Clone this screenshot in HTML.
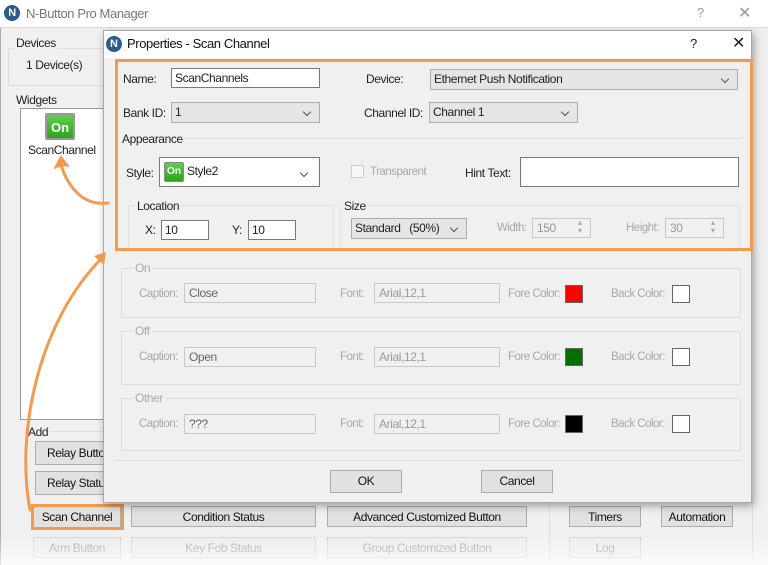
<!DOCTYPE html>
<html><head><meta charset="utf-8"><style>
*{box-sizing:border-box;margin:0;padding:0}
body{width:768px;height:565px;overflow:hidden;background:#f0f0f0;font-family:"Liberation Sans",sans-serif;font-size:12px;letter-spacing:-0.4px;color:#222;position:relative}
.a{position:absolute;white-space:nowrap}
.btn{position:absolute;background:#e1e1e1;border:1px solid #adadad;text-align:center;line-height:20px;font-size:12px;color:#111;white-space:nowrap;overflow:hidden}
.dis{color:#a8a8a8;background:#ececec;border-color:#d4d4d4}
.in{position:absolute;background:#fff;border:1px solid #7a7a7a;padding-left:3px;line-height:18px}
.sel{position:absolute;background:#e5e5e5;border:1px solid #adadad;padding-left:3px;line-height:19px}
.sel:after{content:"";position:absolute;right:9px;top:6px;width:5px;height:5px;border-right:1px solid #555;border-bottom:1px solid #555;transform:rotate(45deg)}
.grp{position:absolute;border:1px solid #dcdcdc}
.gl{position:absolute;background:#f0f0f0;padding:0 2px;top:-8px;left:8px;color:#aaa}
.g{color:#a8a8a8;font-size:11.5px;letter-spacing:-0.5px}
.din{position:absolute;background:#f0f0f0;border:1px solid #c8c8c8;padding-left:4px;line-height:18px;color:#999}
.sw{position:absolute;width:18px;height:18px;border:1px solid #666}
.on{position:absolute;background:linear-gradient(#5fd04a,#2ea21e);border:1px solid #2a7a20;border-radius:2px;color:#fff;font-weight:bold;text-align:center;letter-spacing:0}
</style></head><body>
<div class="a" style="left:0;top:0;width:768px;height:28px;background:#fff;border-bottom:1px solid #ddd"></div>
<div class="a" style="left:4px;top:5px;width:16px;height:16px;border-radius:50%;background:#2a5b8a;color:#fff;font-weight:bold;font-size:11px;text-align:center;line-height:16px">N</div>
<div class="a" style="left:26px;top:6px;font-size:13px;color:#777">N-Button Pro Manager</div>
<div class="a" style="left:697px;top:5px;font-size:13px;color:#999">?</div>
<div class="a" style="left:738px;top:3px;font-size:16px;color:#999">✕</div>
<div class="a" style="left:0;top:28px;width:1px;height:537px;background:#aaa"></div>
<div class="grp" style="left:8px;top:48px;width:120px;height:38px"></div>
<div class="a" style="left:14px;top:36px;background:#f0f0f0;padding:0 2px">Devices</div>
<div class="a" style="left:26px;top:58px">1 Device(s)</div>
<div class="a" style="left:16px;top:93px">Widgets</div>
<div class="a" style="left:20px;top:108px;width:100px;height:312px;background:#fff;border:1px solid #999"></div>
<div class="on" style="left:45px;top:113px;width:30px;height:27px;line-height:25px;font-size:13px;border:2px solid #999">On</div>
<div class="a" style="left:28px;top:143px">ScanChannel</div>
<div class="a" style="left:28px;top:425px">Add</div>
<div class="a" style="left:50px;top:431px;width:60px;height:1px;background:#ddd"></div>
<div class="a" style="left:549px;top:500px;width:1px;height:60px;background:#ddd"></div>
<div class="a" style="left:752px;top:500px;width:1px;height:60px;background:#ddd"></div>
<div class="btn" style="left:35px;top:441px;width:80px;height:24px;text-align:left;padding-left:11px;line-height:22px">Relay Button</div>
<div class="btn" style="left:35px;top:471px;width:80px;height:24px;text-align:left;padding-left:11px;line-height:22px">Relay Status</div>
<div class="btn" style="left:33px;top:506px;width:88px;height:22px">Scan Channel</div>
<div class="a" style="left:31px;top:504px;width:93px;height:26px;border:3px solid #f39a4c"></div>
<div class="btn" style="left:131px;top:506px;width:185px;height:21px">Condition Status</div>
<div class="btn" style="left:327px;top:506px;width:200px;height:21px">Advanced Customized Button</div>
<div class="btn" style="left:569px;top:506px;width:72px;height:21px">Timers</div>
<div class="btn" style="left:661px;top:506px;width:72px;height:21px">Automation</div>
<div class="btn dis" style="left:33px;top:537px;width:88px;height:21px">Arm Button</div>
<div class="btn dis" style="left:131px;top:537px;width:185px;height:21px">Key Fob Status</div>
<div class="btn dis" style="left:327px;top:537px;width:200px;height:21px">Group Customized Button</div>
<div class="btn dis" style="left:569px;top:537px;width:72px;height:21px">Log</div>
<div class="a" style="left:0;top:535px;width:768px;height:30px;background:linear-gradient(rgba(255,255,255,0),rgba(255,255,255,.7))"></div>

<div class="a" style="left:103px;top:30px;width:649px;height:473px;background:#f0f0f0;border:1px solid #aaa;box-shadow:2px 3px 8px rgba(0,0,0,.35)"></div>
<div class="a" style="left:104px;top:31px;width:647px;height:27px;background:#fff"></div>
<div class="a" style="left:106px;top:36px;width:16px;height:16px;border-radius:50%;background:#2a5b8a;color:#fff;font-weight:bold;font-size:11px;text-align:center;line-height:16px;letter-spacing:0">N</div>
<div class="a" style="left:127px;top:36px;font-size:13px;color:#111">Properties - Scan Channel</div>
<div class="a" style="left:690px;top:36px;font-size:13px">?</div>
<div class="a" style="left:732px;top:33px;font-size:16px">✕</div>

<div class="a" style="left:123px;top:72px">Name:</div>
<div class="in" style="left:171px;top:68px;width:149px;height:20px">ScanChannels</div>
<div class="a" style="left:366px;top:72px">Device:</div>
<div class="sel" style="left:430px;top:69px;width:308px;height:21px">Ethernet Push Notification</div>
<div class="a" style="left:123px;top:106px">Bank ID:</div>
<div class="sel" style="left:171px;top:102px;width:149px;height:21px">1</div>
<div class="a" style="left:364px;top:106px">Channel ID:</div>
<div class="sel" style="left:429px;top:102px;width:149px;height:21px">Channel 1</div>
<div class="a" style="left:122px;top:132px">Appearance</div>
<div class="a" style="left:182px;top:138px;width:560px;height:1px;background:#ddd"></div>
<div class="a" style="left:126px;top:166px">Style:</div>
<div class="in" style="left:159px;top:157px;width:161px;height:30px;border-color:#7a7a7a"></div>
<div class="on" style="left:164px;top:162px;width:20px;height:20px;line-height:18px;font-size:10px;border:1px solid #888">On</div>
<div class="a" style="left:187px;top:164px">Style2</div>
<div class="sel" style="left:296px;top:164px;width:20px;height:16px;background:none;border:none"></div>
<div class="a" style="left:351px;top:165px;width:13px;height:13px;border:1px solid #ccc;background:#f7f7f7"></div>
<div class="a g" style="left:370px;top:166px">Transparent</div>
<div class="a" style="left:465px;top:166px">Hint Text:</div>
<div class="in" style="left:520px;top:157px;width:219px;height:30px"></div>
<div class="grp" style="left:128px;top:205px;width:206px;height:44px;border-color:#e2e2e2"></div>
<div class="a" style="left:136px;top:199px;background:#f0f0f0;padding:0 1px">Location</div>
<div class="a" style="left:145px;top:223px">X:</div>
<div class="in" style="left:161px;top:220px;width:48px;height:20px">10</div>
<div class="a" style="left:232px;top:223px">Y:</div>
<div class="in" style="left:248px;top:220px;width:48px;height:20px">10</div>
<div class="grp" style="left:340px;top:205px;width:400px;height:44px;border-color:#e2e2e2"></div>
<div class="a" style="left:343px;top:199px;background:#f0f0f0;padding:0 1px">Size</div>
<div class="sel" style="left:351px;top:218px;width:116px;height:21px">Standard&nbsp;&nbsp;&nbsp;(50%)</div>
<div class="a g" style="left:497px;top:222px">Width:</div>
<div class="din" style="left:532px;top:218px;width:59px;height:20px">150</div>
<div class="a g" style="left:578px;top:219px;font-size:8px;line-height:8px">▴<br>▾</div>
<div class="a g" style="left:626px;top:222px">Height:</div>
<div class="din" style="left:665px;top:218px;width:59px;height:20px">30</div>
<div class="a g" style="left:711px;top:219px;font-size:8px;line-height:8px">▴<br>▾</div>
<div class="a" style="left:115px;top:59px;width:638px;height:192px;border:3px solid #f39a4c"></div>

<div class="grp" style="left:121px;top:268px;width:620px;height:50px"><span class="gl" style="left:11px">On</span></div>
<div class="grp" style="left:121px;top:331px;width:620px;height:54px"><span class="gl" style="left:11px">Off</span></div>
<div class="grp" style="left:121px;top:398px;width:620px;height:53px"><span class="gl" style="left:11px">Other</span></div>
<div class="a g" style="left:139px;top:288px">Caption:</div>
<div class="din" style="left:184px;top:283px;width:132px;height:20px;color:#666">Close</div>
<div class="a g" style="left:340px;top:288px">Font:</div>
<div class="din" style="left:374px;top:283px;width:126px;height:20px">Arial,12,1</div>
<div class="a g" style="left:508px;top:288px">Fore Color:</div>
<div class="sw" style="left:565px;top:285px;background:#f00"></div>
<div class="a g" style="left:611px;top:288px">Back Color:</div>
<div class="sw" style="left:672px;top:285px;background:#fff"></div>
<div class="a g" style="left:139px;top:351px">Caption:</div>
<div class="din" style="left:184px;top:347px;width:132px;height:20px;color:#666">Open</div>
<div class="a g" style="left:340px;top:351px">Font:</div>
<div class="din" style="left:374px;top:347px;width:126px;height:20px">Arial,12,1</div>
<div class="a g" style="left:508px;top:351px">Fore Color:</div>
<div class="sw" style="left:565px;top:348px;background:#007000"></div>
<div class="a g" style="left:611px;top:351px">Back Color:</div>
<div class="sw" style="left:672px;top:348px;background:#fff"></div>
<div class="a g" style="left:139px;top:418px">Caption:</div>
<div class="din" style="left:184px;top:414px;width:132px;height:20px;color:#666">???</div>
<div class="a g" style="left:340px;top:418px">Font:</div>
<div class="din" style="left:374px;top:414px;width:126px;height:20px">Arial,12,1</div>
<div class="a g" style="left:508px;top:418px">Fore Color:</div>
<div class="sw" style="left:565px;top:415px;background:#000"></div>
<div class="a g" style="left:611px;top:418px">Back Color:</div>
<div class="sw" style="left:672px;top:415px;background:#fff"></div>
<div class="a" style="left:113px;top:460px;width:630px;height:1px;background:#e0e0e0"></div>
<div class="btn" style="left:330px;top:470px;width:72px;height:23px">OK</div>
<div class="btn" style="left:481px;top:470px;width:72px;height:23px">Cancel</div>

<svg class="a" style="left:0;top:0" width="768" height="565">
<g fill="none" stroke="#f39a4c" stroke-width="3" stroke-linecap="round">
<path d="M108 203 C85 206 70 190 62 168"/>
<path d="M55 168 L61 157 L68 166" fill="#f39a4c" stroke-width="2"/>
<path d="M30 510 C15 430 40 320 102 258"/>
</g>
<path d="M94 256 L106 252 L104 265 Z" fill="#f39a4c"/>
</svg>
</body></html>
